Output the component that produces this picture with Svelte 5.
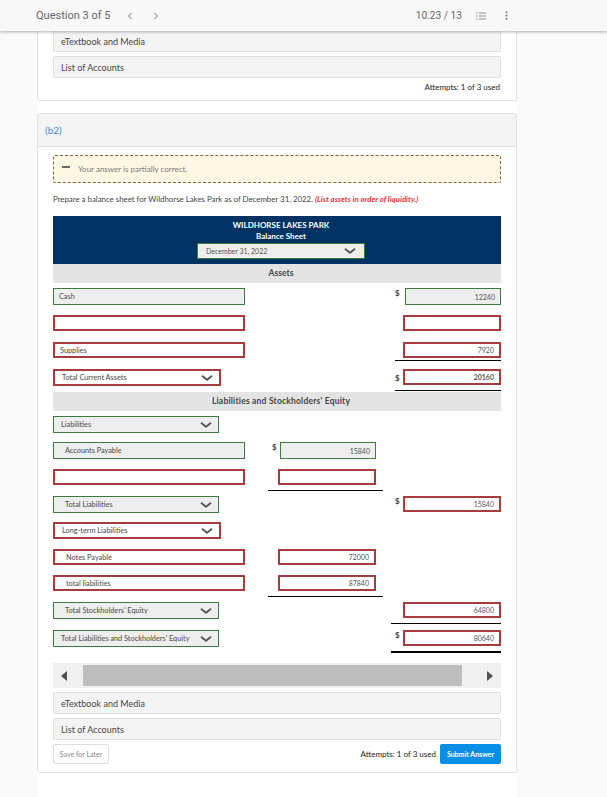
<script>
  const rows = [
    { label: { text: 'Cash', ok: true, pad: 'p1' }, right: { value: '12240', ok: true, dollar: true } },
    { label: { text: '' }, right: { value: '' } },
    { label: { text: 'Supplies', pad: 'p1' }, right: { value: '7920', rule: 'thin' } },
    { label: { text: 'Total Current Assets', select: true, pad: 'p2' }, right: { value: '20160', dollar: true, rule: 'thin' }, tail: 'band' },
    { band: "Liabilities and Stockholders' Equity" },
    { label: { text: 'Liabilities', ok: true, select: true, pad: 'p2' }, size: 'short' },
    { label: { text: 'Accounts Payable', ok: true, pad: 'p3' }, mid: { value: '15840', ok: true, dollar: true } },
    { label: { text: '' }, mid: { value: '', rule: 'gap' } },
    { label: { text: 'Total Liabilities', ok: true, select: true, pad: 'p3' }, right: { value: '15840', dollar: true }, size: 'short' },
    { label: { text: 'Long-term Liabilities', select: true, pad: 'p2' } },
    { label: { text: 'Notes Payable', pad: 'p3' }, mid: { value: '72000' }, size: 'short' },
    { label: { text: 'total liabilities', pad: 'p3' }, mid: { value: '87840', rule: 'gap' } },
    { label: { text: "Total Stockholders' Equity", ok: true, select: true, pad: 'p3' }, right: { value: '64800', rule: 'gap', wide: true }, size: 'tall' },
    { label: { text: "Total Liabilities and Stockholders' Equity", ok: true, select: true, pad: 'p2' }, right: { value: '80640', dollar: true, rule: 'double', wide: true } }
  ];
</script>

{#snippet chevron()}
  <svg class="chevron" viewBox="0 0 12 6" aria-hidden="true">
    <path d="M1 .8 6 4.8 11 .8" fill="none" stroke="#555" stroke-width="1.8" />
  </svg>
{/snippet}

{#snippet amount(cell)}
  <div class="amount rule-{cell.rule ?? 'none'}" class:wide={cell.wide}>
    <span class="dollar">{cell.dollar ? '$' : ''}</span>
    <div class="field num" class:ok={cell.ok}>{cell.value}</div>
  </div>
{/snippet}

<header class="topbar">
  <span class="progress">Question 3 of 5</span>
  <span class="arrows">
    <svg viewBox="0 0 6 8" aria-hidden="true"><path d="M4.5 1 1.5 4l3 3" fill="none" stroke="#777" /></svg>
    <svg viewBox="0 0 6 8" aria-hidden="true"><path d="M1.5 1l3 3-3 3" fill="none" stroke="#777" /></svg>
  </span>
  <span class="score">10.23 / 13</span>
  <svg class="list-icon" viewBox="0 0 10 8" aria-hidden="true">
    <path d="M0 1h1.5M3 1h7M0 4h1.5M3 4h7M0 7h1.5M3 7h7" stroke="#888" />
  </svg>
  <svg class="dots" viewBox="0 0 3 11" aria-hidden="true">
    <rect x=".5" y=".5" width="2" height="2" fill="#666" />
    <rect x=".5" y="4.5" width="2" height="2" fill="#666" />
    <rect x=".5" y="8.5" width="2" height="2" fill="#666" />
  </svg>
</header>

<main class="column">
  <section class="card first">
    <div class="link-box top">eTextbook and Media</div>
    <div class="link-box">List of Accounts</div>
    <p class="attempts">Attempts: 1 of 3 used</p>
  </section>

  <section class="card second">
    <h2 class="part">(b2)</h2>
    <div class="body">
      <div class="alert">
        <span class="minus"></span>
        <span class="alert-text">Your answer is partially correct.</span>
      </div>
      <p class="prompt">
        Prepare a balance sheet for Wildhorse Lakes Park as of December 31, 2022.
        <em>(List assets in order of liquidity.)</em>
      </p>

      <div class="sheet-head">
        <div class="company">WILDHORSE LAKES PARK</div>
        <div class="company">Balance Sheet</div>
        <div class="field select date ok">
          <span>December 31, 2022</span>
          {@render chevron()}
        </div>
      </div>
      <div class="band assets">Assets</div>

      <div class="rows">
        {#each rows as row}
          {#if row.band}
            <div class="band liabilities">{row.band}</div>
          {:else}
            <div class="row {row.size ?? ''} {row.tail ?? ''}">
              <div
                class="field label {row.label.pad ?? ''}"
                class:ok={row.label.ok}
                class:select={row.label.select}
              >
                <span class="label-text">{row.label.text}</span>
                {#if row.label.select}{@render chevron()}{/if}
              </div>
              <div class="cell mid">
                {#if row.mid}{@render amount(row.mid)}{/if}
              </div>
              <div class="cell right">
                {#if row.right}{@render amount(row.right)}{/if}
              </div>
            </div>
          {/if}
        {/each}
      </div>

      <div class="scrollbar">
        <span class="tri left"></span>
        <span class="thumb"></span>
        <span class="tri right"></span>
      </div>

      <div class="link-box">eTextbook and Media</div>
      <div class="link-box">List of Accounts</div>

      <div class="actions">
        <button type="button" class="save">Save for Later</button>
        <span class="attempts-inline">Attempts: 1 of 3 used</span>
        <button type="button" class="submit">Submit Answer</button>
      </div>
    </div>
  </section>
</main>

<style>
  :global(body) {
    background: #fafafa;
    font-family: Lato, "Open Sans", sans-serif;
    color: #444;
  }

  .topbar {
    position: relative;
    z-index: 2;
    display: flex;
    align-items: center;
    height: 31px;
    padding: 0 99px 0 36px;
    background: #f8f8f8;
    box-shadow: 0 1px 3px rgba(0, 0, 0, 0.3);
    font-family: Roboto, sans-serif;
    font-size: 11px;
    color: #666;
  }

  .progress {
    width: 91px;
  }

  .arrows {
    display: flex;
    gap: 20px;
  }

  .arrows svg {
    width: 6px;
    height: 8px;
  }

  .score {
    margin-left: auto;
    font-size: 10.2px;
  }

  .list-icon {
    width: 10px;
    height: 8px;
    margin-left: 14px;
  }

  .dots {
    width: 3px;
    height: 9px;
    margin-left: 19px;
  }

  .column {
    width: 480px;
    margin-left: 37px;
    padding-bottom: 24px;
    background: #fff;
  }

  .card {
    box-sizing: border-box;
    border: 1px solid #e2e2e2;
    border-radius: 2px;
    background: #fff;
  }

  .first {
    height: 70px;
    padding: 0 15px;
    border-top: none;
  }

  .second {
    height: 660px;
    margin-top: 12px;
  }

  .link-box {
    box-sizing: border-box;
    display: flex;
    align-items: center;
    height: 22px;
    margin-bottom: 4px;
    padding-left: 7px;
    border: 1px solid #dedede;
    border-radius: 2px;
    background: #f4f4f4;
    font-size: 9px;
    color: #444;
  }

  .link-box.top {
    height: 21px;
    border-top: none;
  }

  .attempts {
    margin: 4px 0 0;
    padding-right: 1px;
    text-align: right;
    font-size: 8px;
    color: #222;
  }

  .part {
    display: flex;
    align-items: center;
    box-sizing: border-box;
    height: 33px;
    margin: 0;
    padding-left: 7px;
    border-bottom: 1px solid #e2e2e2;
    background: #f4f4f4;
    font-size: 10px;
    font-weight: 400;
    color: #3a8fd8;
  }

  .body {
    padding: 8px 15px 0;
  }

  .alert {
    box-sizing: border-box;
    display: flex;
    align-items: center;
    gap: 9px;
    height: 28px;
    padding-left: 8px;
    border: 1px dashed #7d6a36;
    border-radius: 2px;
    background: #fef7e3;
    font-size: 8px;
    color: #777;
  }

  .alert-text {
    padding-bottom: 1px;
  }

  .minus {
    width: 8px;
    height: 2px;
    margin-right: -1px;
    margin-bottom: 5px;
    background: #666;
  }

  .prompt {
    margin: 11px 0 12px;
    font-size: 7.85px;
    line-height: 10px;
    color: #444;
  }

  .prompt em {
    font-weight: 700;
    color: #f0323c;
  }

  .sheet-head {
    box-sizing: border-box;
    height: 48px;
    padding: 4px 0 0 8px;
    background: #003263;
    text-align: center;
  }

  .company {
    height: 11px;
    font-size: 8px;
    line-height: 11px;
    font-weight: 700;
    color: #fff;
  }

  .band {
    height: 19px;
    padding-left: 8px;
    background: #e4e4e4;
    font-size: 8.5px;
    font-weight: 700;
    line-height: 19px;
    text-align: center;
    color: #444;
  }

  .liabilities {
    margin-bottom: 5px;
    letter-spacing: 0.2px;
  }

  .assets {
    margin-bottom: 5px;
  }

  .rows {
    display: flex;
    flex-direction: column;
    margin-bottom: 6px;
  }

  .row {
    display: grid;
    grid-template-columns: 192px 23px 115px 8px 110px;
    height: 27px;
  }

  .row.short {
    height: 26px;
  }

  .row.tall {
    height: 28px;
  }

  .row.band {
    height: 23px;
    padding-left: 0;
    background: none;
  }

  .mid {
    grid-column: 3;
  }

  .right {
    grid-column: 5;
  }

  .field {
    box-sizing: border-box;
    display: flex;
    align-items: center;
    height: 16px;
    border: 2px solid #a83c3c;
    background: #fff;
    font-size: 7.3px;
    color: #555;
  }

  .field.ok {
    height: 17px;
    border: 1px solid #3d7a3d;
    background: #eee;
  }

  .label {
    width: 192px;
  }

  .label.select {
    justify-content: space-between;
    width: 168px;
    height: 17px;
    padding-right: 6px;
  }

  .label.select.ok {
    width: 166px;
  }

  .p1 {
    padding-left: 5px;
  }

  .p2 {
    padding-left: 7px;
  }

  .p3 {
    padding-left: 11px;
  }

  .label-text {
    white-space: nowrap;
    font-weight: 500;
  }

  .field.date {
    justify-content: space-between;
    width: 168px;
    height: 16px;
    margin: 1px auto 0;
    padding: 0 8px;
    font-size: 7px;
  }

  .chevron {
    flex: none;
    width: 12px;
    height: 6px;
  }

  .amount {
    box-sizing: border-box;
    display: flex;
    justify-content: space-between;
    padding-left: 4px;
  }

  .mid .amount {
    padding-right: 7px;
  }

  .right .amount {
    margin-left: 4px;
    padding-left: 0;
  }

  .right .amount.wide {
    margin-left: 0;
    padding-left: 4px;
  }

  .rule-thin {
    padding-bottom: 2px;
    border-bottom: 1px solid #000;
  }

  .rule-gap {
    padding-bottom: 5px;
    border-bottom: 1px solid #000;
  }

  .rule-double {
    padding-bottom: 5px;
    border-bottom: 2px solid #000;
  }

  .dollar {
    font-size: 8px;
    font-weight: 700;
    color: #444;
  }

  .num {
    justify-content: flex-end;
    width: 98px;
    padding-right: 5px;
    font-size: 7px;
  }

  .num.ok {
    width: 96px;
  }

  .scrollbar {
    display: flex;
    align-items: center;
    justify-content: space-between;
    box-sizing: border-box;
    height: 25px;
    margin-bottom: 4px;
    padding: 0 8px;
    background: #f0f0f0;
  }

  .thumb {
    width: 379px;
    height: 21px;
    margin-right: 10px;
    background: #bebebe;
  }

  .tri {
    width: 0;
    height: 0;
    border-top: 5.5px solid transparent;
    border-bottom: 5.5px solid transparent;
  }

  .tri.left {
    border-right: 6px solid #505050;
  }

  .tri.right {
    border-left: 6px solid #505050;
  }

  .actions {
    display: flex;
    align-items: center;
    height: 20px;
  }

  .save {
    box-sizing: border-box;
    width: 56px;
    height: 20px;
    padding: 0;
    border: 1px solid #ddd;
    border-radius: 2px;
    background: #fff;
    font-family: inherit;
    font-size: 7px;
    color: #888;
  }

  .attempts-inline {
    margin-left: auto;
    margin-right: 4px;
    font-size: 8px;
    color: #222;
  }

  .submit {
    width: 61px;
    height: 20px;
    padding: 0;
    border: none;
    border-radius: 2px;
    background: #0a8ee6;
    font-family: inherit;
    font-size: 7px;
    font-weight: 700;
    color: #fff;
  }
</style>
